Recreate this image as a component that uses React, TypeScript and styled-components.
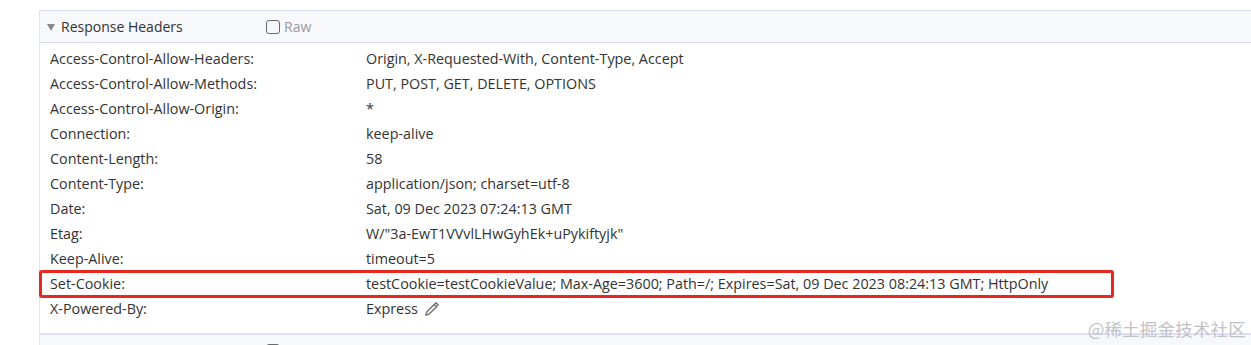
import React from "react";
import styled, { createGlobalStyle } from "styled-components";

const Global = createGlobalStyle`
  html, body { margin: 0; padding: 0; background: #ffffff; }
  body { font-family: "Open Sans", "Noto Sans", sans-serif; }
`;

const Page = styled.div`
  width: 1251px;
  height: 345px;
  overflow: hidden;
  position: relative;
  background: #fff;
  padding-top: 10px;
  box-sizing: border-box;
`;

const Panel = styled.div`
  margin-left: 39px;
  border-left: 1px solid #e3e4ef;
  display: flex;
  flex-direction: column;
`;

const SectionHeader = styled.div`
  height: 31px;
  background: #f7f8fc;
  border-top: 1px solid #dcdcf0;
  border-bottom: 1px solid #dcdcf0;
  display: flex;
  align-items: center;
  padding-left: 7px;
  font-size: 14px;
  color: #333;
`;

const Triangle = styled.span`
  width: 0;
  height: 0;
  border-left: 4px solid transparent;
  border-right: 4px solid transparent;
  border-top: 7px solid #8a8a8a;
  margin-right: 6px;
  margin-top: 1px;
`;

const Title = styled.span`
  width: 205px;
`;

const Check = styled.span`
  width: 14px;
  height: 14px;
  border: 1px solid #6a6a6a;
  border-radius: 3px;
  margin-right: 4px;
  box-sizing: border-box;
`;

const RawLabel = styled.span`
  color: #9a9a9a;
`;

const Rows = styled.div`
  display: flex;
  flex-direction: column;
  padding: 3px 0 12px;
  border-bottom: 1px solid #e3e4ef;
`;

const Row = styled.div<{ $mark?: boolean }>`
  position: relative;
  height: 25px;
  display: flex;
  align-items: center;
  font-size: 14.35px;
  color: #333;
  ${(p) =>
    p.$mark
      ? `&::after {
    content: "";
    position: absolute;
    left: -1px;
    top: -1px;
    width: 1075px;
    height: 28px;
    box-sizing: border-box;
    border: 3px solid #e8281f;
    border-radius: 3px;
  }`
      : ""}
`;

const Key = styled.span`
  width: 316px;
  padding-left: 10px;
  flex-shrink: 0;
`;

const Value = styled.span`
  display: flex;
  align-items: center;
  gap: 5px;
  white-space: nowrap;
`;

const Watermark = styled.div`
  position: absolute;
  right: 5px;
  bottom: 4px;
  font-family: "Noto Sans CJK SC", sans-serif;
  font-size: 17.5px;
  color: #c2c2c6;
  letter-spacing: 0.2px;
`;

const Pencil = () => (
  <svg width="18" height="18" viewBox="0 0 16 16" fill="none" stroke="#707070" strokeWidth="1.2">
    <path d="M2.5 13.5 L3.5 10.5 L11.5 2.5 L13.5 4.5 L5.5 12.5 Z" strokeLinejoin="round" />
    <path d="M10 4 L12 6" />
  </svg>
);

const headers: [string, string][] = [
  ["Access-Control-Allow-Headers:", "Origin, X-Requested-With, Content-Type, Accept"],
  ["Access-Control-Allow-Methods:", "PUT, POST, GET, DELETE, OPTIONS"],
  ["Access-Control-Allow-Origin:", "*"],
  ["Connection:", "keep-alive"],
  ["Content-Length:", "58"],
  ["Content-Type:", "application/json; charset=utf-8"],
  ["Date:", "Sat, 09 Dec 2023 07:24:13 GMT"],
  ["Etag:", 'W/"3a-EwT1VVvlLHwGyhEk+uPykiftyjk"'],
  ["Keep-Alive:", "timeout=5"],
  ["Set-Cookie:", "testCookie=testCookieValue; Max-Age=3600; Path=/; Expires=Sat, 09 Dec 2023 08:24:13 GMT; HttpOnly"],
  ["X-Powered-By:", "Express"],
];

export default function App() {
  return (
    <Page>
      <Global />
      <Panel>
        <SectionHeader>
          <Triangle />
          <Title>Response Headers</Title>
          <Check />
          <RawLabel>Raw</RawLabel>
        </SectionHeader>
        <Rows>
          {headers.map(([k, v]) => (
            <Row key={k} $mark={k === "Set-Cookie:"}>
              <Key>{k}</Key>
              <Value>
                {v}
                {k === "X-Powered-By:" && <Pencil />}
              </Value>
            </Row>
          ))}
        </Rows>
        <SectionHeader>
          <Triangle />
          <Title>Request Headers</Title>
          <Check />
          <RawLabel>Raw</RawLabel>
        </SectionHeader>
      </Panel>
      <Watermark>@稀土掘金技术社区</Watermark>
    </Page>
  );
}
